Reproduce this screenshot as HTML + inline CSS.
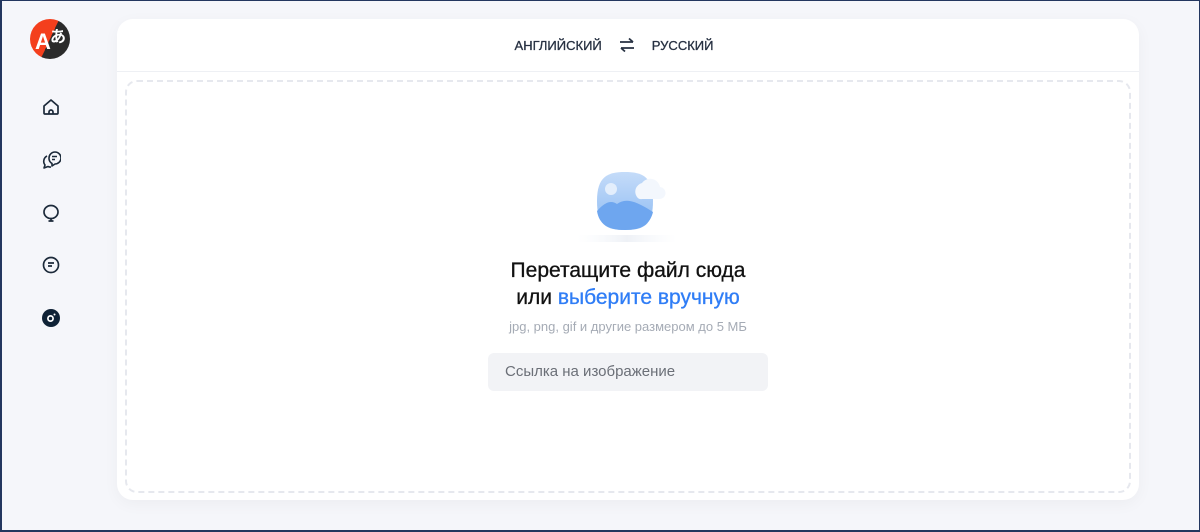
<!DOCTYPE html>
<html><head><meta charset="utf-8"><style>
*{margin:0;padding:0;box-sizing:border-box}
html,body{width:1200px;height:532px;overflow:hidden}
body{background:#f5f6fa;font-family:"Liberation Sans",sans-serif;position:relative}
.frame{position:absolute;left:0;top:0;width:1200px;height:532px;border:1px solid #23365f;border-width:1px 1px 2px 2px;pointer-events:none;z-index:5}
.logo{position:absolute;left:30px;top:19px;width:40px;height:40px;border-radius:50%;overflow:hidden;background:linear-gradient(115deg,#f43f1d 0 50%,#2b2b2b 50%)}
.logo span{position:absolute;color:#fff;font-weight:bold}
.ic{position:absolute;left:41px;width:20px;height:20px}
.card{position:absolute;left:117px;top:19px;width:1022px;height:481px;background:#fff;border-radius:16px;box-shadow:0 4px 16px rgba(0,0,0,.04)}
.hdr{height:53px;border-bottom:1px solid #eef0f4;display:flex;justify-content:center;align-items:center;gap:16px;font-size:13px;color:#273142;padding-right:28px;-webkit-text-stroke:.3px #273142}
.drop{position:absolute;left:8px;top:61px;right:8px;bottom:7px;border:2px dashed #e6e8ee;border-radius:12px}
.t1{position:absolute;left:0;right:0;top:238px;text-align:center;font-size:21px;color:#111;line-height:27px;-webkit-text-stroke:.3px #111}
.t1 a{color:#2f7df6;-webkit-text-stroke:.3px #2f7df6}
.t2{position:absolute;left:0;right:0;top:300px;text-align:center;font-size:13px;color:#a5abb5}
.inp{position:absolute;left:371px;top:334px;width:280px;height:38px;background:#f2f3f6;border-radius:6px;font-size:15px;color:#6b6f77;padding:10px 17px}
</style></head><body>
<div class="frame"></div>
<div class="logo"><span style="left:5px;top:10px;font-size:22px">A</span><span style="left:20px;top:4px;font-size:16px;font-family:'Noto Sans CJK JP',sans-serif">あ</span></div>
<svg class="ic" style="top:97px" viewBox="0 0 20 20" fill="none" stroke="#1c2a3a" stroke-width="1.7" stroke-linejoin="round"><path d="M3 9 10 3l7 6v7a1 1 0 0 1-1 1H4a1 1 0 0 1-1-1z"/><path d="M8 17v-2a2 2 0 0 1 4 0v2"/></svg>
<svg class="ic" style="top:150px" viewBox="0 0 20 20" fill="none" stroke="#1c2a3a" stroke-width="1.6" stroke-linejoin="round"><path d="M8 8a6 6 0 1 1 6 6l-3 2v-2.5A6 6 0 0 1 8 8z"/><path d="M6 6a6 6 0 0 0-2 9l-1 3 4-1.5a6 6 0 0 0 3 .5"/><path d="M11 6.5h5M11 9.5h3"/></svg>
<svg class="ic" style="top:203px" viewBox="0 0 20 20" fill="none" stroke="#1c2a3a" stroke-width="1.7"><ellipse cx="10" cy="9" rx="7" ry="6.5"/><path d="M10 15.5v2.5M7.5 18h5"/></svg>
<svg class="ic" style="top:255px" viewBox="0 0 20 20" fill="none" stroke="#1c2a3a" stroke-width="1.7"><rect x="2.5" y="2.5" width="15" height="15" rx="7.5"/><path d="M7 8h6M7 11h4"/></svg>
<svg class="ic" style="top:308px" viewBox="0 0 20 20"><circle cx="10" cy="10" r="9" fill="#0f2236"/><circle cx="9.5" cy="10.5" r="2.6" fill="none" stroke="#fff" stroke-width="1.7"/><circle cx="13.5" cy="6.5" r="1" fill="#fff"/></svg>
<div class="card">
<div class="hdr"><span>АНГЛИЙСКИЙ</span><svg width="18" height="16" viewBox="0 0 18 16" fill="none" stroke="#273142" stroke-width="1.8"><path d="M2 5h13M11 1.5 15 5M16 11H3M7 14.5 3 11"/></svg><span>РУССКИЙ</span></div>
<div class="drop"></div>
<svg style="position:absolute;left:460px;top:150px" width="100" height="75" viewBox="0 0 100 75"><defs><linearGradient id="g" x1="0" y1="0" x2="0" y2="1"><stop offset="0" stop-color="#c5dcf9"/><stop offset="1" stop-color="#8cbaf2"/></linearGradient><linearGradient id="w"><stop offset="0" stop-color="#f5f8fc" stop-opacity="0"/><stop offset=".5" stop-color="#eef1f6"/><stop offset="1" stop-color="#f5f8fc" stop-opacity="0"/></linearGradient></defs><rect x="0" y="66" width="100" height="7" fill="url(#w)"/><path d="M20 32c0-24 10-29 28-29s28 5 28 29-9 29-28 29S20 56 20 32z" fill="url(#g)"/><path d="M20 42c8-9 14-11 20-7 8-6 18-4 36 8-3 12-11 18-28 18S22 55 20 42z" fill="#6ea6ef"/><circle cx="34" cy="20" r="6" fill="#e3eefc"/><path d="M60 28a9 9 0 0 1 5-14 10 10 0 0 1 18 4 6 6 0 0 1-1 12H65a5 5 0 0 1-5-2z" fill="#f3f7fd"/></svg>
<div class="t1">Перетащите файл сюда<br>или <a>выберите вручную</a></div>
<div class="t2">jpg, png, gif и другие размером до 5 МБ</div>
<div class="inp">Ссылка на изображение</div>
</div>
</body></html>
